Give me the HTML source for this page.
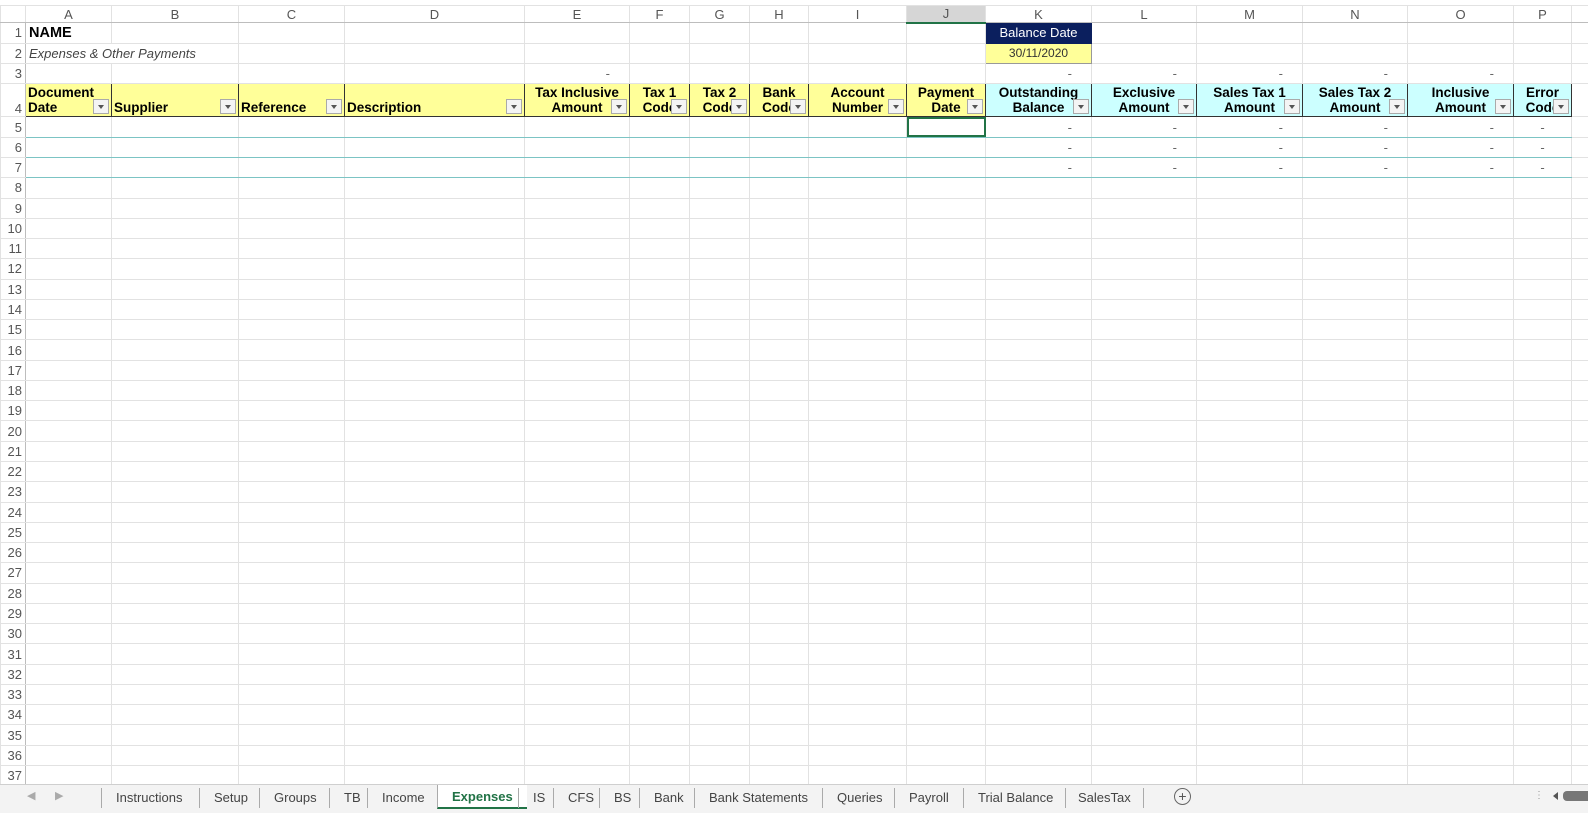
<!DOCTYPE html>
<html><head><meta charset="utf-8"><style>
*{box-sizing:border-box;margin:0;padding:0}
body{width:1588px;height:813px;overflow:hidden;background:#fff;font-family:"Liberation Sans",sans-serif;font-size:13px;color:#000;position:relative}
table{position:absolute;left:0;top:5px;border-collapse:collapse;table-layout:fixed;width:1588px}
td,th{border:1px solid #e2e2e2;height:20.27px;padding:0 3px;white-space:nowrap;overflow:hidden;font-weight:normal;position:relative}
th{color:#555;font-size:13px;text-align:center;background:#fff}
thead th{height:17.3px;border-bottom:1px solid #bdbdbd}
tbody th{text-align:right;padding-right:3px;border-right:1px solid #bdbdbd}
tr.h4 td{height:33.4px;font-weight:bold;font-size:13.5px;line-height:15px;vertical-align:bottom;border:1px solid #333;padding:0 17px 1px 2px}
tr.h4 td.y{background:#ffff99}
tr.h4 td.c{background:#ccffff;text-align:center;padding:0 2px 1px 2px}
tr.h4 td.yc{background:#ffff99;text-align:center;padding:0 2px 1px 2px}
.dd{position:absolute;right:2px;bottom:2px;width:16px;height:15px;border:1px solid #aaa;background:#f4f4f4}
.dd:after{content:"";position:absolute;left:4px;top:5px;border-left:3.5px solid transparent;border-right:3.5px solid transparent;border-top:4px solid #555}
tr.t td{border-bottom:1px solid #7cc4c4}
.dash{text-align:right;color:#666;padding-right:19px}
.tabs{position:absolute;left:0;top:784px;width:1588px;height:29px;background:#f3f3f3;border-top:1px solid #cfcfcf}
.tab{position:absolute;top:3px;height:20px;line-height:20px;font-size:13px;color:#444;padding:0 14px;border-left:1px solid #aaa}
</style></head><body>
<table>
<colgroup><col style="width:25px"><col style="width:86px"><col style="width:127px"><col style="width:106px"><col style="width:180px"><col style="width:105px"><col style="width:60px"><col style="width:60px"><col style="width:59px"><col style="width:98px"><col style="width:79px"><col style="width:106px"><col style="width:105px"><col style="width:106px"><col style="width:105px"><col style="width:106px"><col style="width:58px"><col style="width:17px"></colgroup>
<thead><tr><th></th><th>A</th><th>B</th><th>C</th><th>D</th><th>E</th><th>F</th><th>G</th><th>H</th><th>I</th><th style="background:#d6d6d6;border-bottom:2px solid #217346">J</th><th>K</th><th>L</th><th>M</th><th>N</th><th>O</th><th>P</th><th></th></tr></thead>
<tbody>
<tr><th>1</th><td style="font-weight:bold;font-size:14.5px">NAME</td><td></td><td></td><td></td><td></td><td></td><td></td><td></td><td></td><td></td><td style="background:#0b1f5e;color:#fff;text-align:center;border:1px solid #0b1f5e">Balance Date</td><td></td><td></td><td></td><td></td><td></td><td></td></tr>
<tr><th>2</th><td colspan="2" style="font-style:italic;color:#444">Expenses &amp; Other Payments</td><td></td><td></td><td></td><td></td><td></td><td></td><td></td><td></td><td style="background:#ffff99;text-align:center;color:#333;font-size:12px;border:1px solid #999">30/11/2020</td><td></td><td></td><td></td><td></td><td></td><td></td></tr>
<tr><th>3</th><td></td><td></td><td></td><td></td><td class="dash">-</td><td></td><td></td><td></td><td></td><td></td><td class="dash">-</td><td class="dash">-</td><td class="dash">-</td><td class="dash">-</td><td class="dash">-</td><td></td><td></td></tr>
<tr class="h4"><th style="vertical-align:bottom">4</th>
<td class="y">Document<br>Date<span class="dd"></span></td>
<td class="y">Supplier<span class="dd"></span></td>
<td class="y">Reference<span class="dd"></span></td>
<td class="y">Description<span class="dd"></span></td>
<td class="yc">Tax Inclusive<br>Amount<span class="dd"></span></td>
<td class="yc">Tax 1<br>Code<span class="dd"></span></td>
<td class="yc">Tax 2<br>Code<span class="dd"></span></td>
<td class="yc">Bank<br>Code<span class="dd"></span></td>
<td class="yc">Account<br>Number<span class="dd"></span></td>
<td class="yc">Payment<br>Date<span class="dd"></span></td>
<td class="c">Outstanding<br>Balance<span class="dd"></span></td>
<td class="c">Exclusive<br>Amount<span class="dd"></span></td>
<td class="c">Sales Tax 1<br>Amount<span class="dd"></span></td>
<td class="c">Sales Tax 2<br>Amount<span class="dd"></span></td>
<td class="c">Inclusive<br>Amount<span class="dd"></span></td>
<td class="c">Error<br>Code<span class="dd"></span></td>
<td style="border:none;border-left:1px solid #333;background:#fff"></td></tr>
<tr class="t"><th>5</th><td></td><td></td><td></td><td></td><td></td><td></td><td></td><td></td><td></td><td style="outline:2px solid #217346;outline-offset:-2px"></td><td class="dash">-</td><td class="dash">-</td><td class="dash">-</td><td class="dash">-</td><td class="dash">-</td><td class="dash" style="text-align:center;padding:0">-</td><td style="border-left:1px solid #7cc4c4;border-bottom-color:#e2e2e2"></td></tr>
<tr class="t"><th>6</th><td></td><td></td><td></td><td></td><td></td><td></td><td></td><td></td><td></td><td></td><td class="dash">-</td><td class="dash">-</td><td class="dash">-</td><td class="dash">-</td><td class="dash">-</td><td class="dash" style="text-align:center;padding:0">-</td><td style="border-left:1px solid #7cc4c4;border-bottom-color:#e2e2e2"></td></tr>
<tr class="t"><th>7</th><td></td><td></td><td></td><td></td><td></td><td></td><td></td><td></td><td></td><td></td><td class="dash">-</td><td class="dash">-</td><td class="dash">-</td><td class="dash">-</td><td class="dash">-</td><td class="dash" style="text-align:center;padding:0">-</td><td style="border-left:1px solid #7cc4c4;border-bottom-color:#e2e2e2"></td></tr>
<tr><th>8</th><td></td><td></td><td></td><td></td><td></td><td></td><td></td><td></td><td></td><td></td><td></td><td></td><td></td><td></td><td></td><td></td><td></td></tr>
<tr><th>9</th><td></td><td></td><td></td><td></td><td></td><td></td><td></td><td></td><td></td><td></td><td></td><td></td><td></td><td></td><td></td><td></td><td></td></tr>
<tr><th>10</th><td></td><td></td><td></td><td></td><td></td><td></td><td></td><td></td><td></td><td></td><td></td><td></td><td></td><td></td><td></td><td></td><td></td></tr>
<tr><th>11</th><td></td><td></td><td></td><td></td><td></td><td></td><td></td><td></td><td></td><td></td><td></td><td></td><td></td><td></td><td></td><td></td><td></td></tr>
<tr><th>12</th><td></td><td></td><td></td><td></td><td></td><td></td><td></td><td></td><td></td><td></td><td></td><td></td><td></td><td></td><td></td><td></td><td></td></tr>
<tr><th>13</th><td></td><td></td><td></td><td></td><td></td><td></td><td></td><td></td><td></td><td></td><td></td><td></td><td></td><td></td><td></td><td></td><td></td></tr>
<tr><th>14</th><td></td><td></td><td></td><td></td><td></td><td></td><td></td><td></td><td></td><td></td><td></td><td></td><td></td><td></td><td></td><td></td><td></td></tr>
<tr><th>15</th><td></td><td></td><td></td><td></td><td></td><td></td><td></td><td></td><td></td><td></td><td></td><td></td><td></td><td></td><td></td><td></td><td></td></tr>
<tr><th>16</th><td></td><td></td><td></td><td></td><td></td><td></td><td></td><td></td><td></td><td></td><td></td><td></td><td></td><td></td><td></td><td></td><td></td></tr>
<tr><th>17</th><td></td><td></td><td></td><td></td><td></td><td></td><td></td><td></td><td></td><td></td><td></td><td></td><td></td><td></td><td></td><td></td><td></td></tr>
<tr><th>18</th><td></td><td></td><td></td><td></td><td></td><td></td><td></td><td></td><td></td><td></td><td></td><td></td><td></td><td></td><td></td><td></td><td></td></tr>
<tr><th>19</th><td></td><td></td><td></td><td></td><td></td><td></td><td></td><td></td><td></td><td></td><td></td><td></td><td></td><td></td><td></td><td></td><td></td></tr>
<tr><th>20</th><td></td><td></td><td></td><td></td><td></td><td></td><td></td><td></td><td></td><td></td><td></td><td></td><td></td><td></td><td></td><td></td><td></td></tr>
<tr><th>21</th><td></td><td></td><td></td><td></td><td></td><td></td><td></td><td></td><td></td><td></td><td></td><td></td><td></td><td></td><td></td><td></td><td></td></tr>
<tr><th>22</th><td></td><td></td><td></td><td></td><td></td><td></td><td></td><td></td><td></td><td></td><td></td><td></td><td></td><td></td><td></td><td></td><td></td></tr>
<tr><th>23</th><td></td><td></td><td></td><td></td><td></td><td></td><td></td><td></td><td></td><td></td><td></td><td></td><td></td><td></td><td></td><td></td><td></td></tr>
<tr><th>24</th><td></td><td></td><td></td><td></td><td></td><td></td><td></td><td></td><td></td><td></td><td></td><td></td><td></td><td></td><td></td><td></td><td></td></tr>
<tr><th>25</th><td></td><td></td><td></td><td></td><td></td><td></td><td></td><td></td><td></td><td></td><td></td><td></td><td></td><td></td><td></td><td></td><td></td></tr>
<tr><th>26</th><td></td><td></td><td></td><td></td><td></td><td></td><td></td><td></td><td></td><td></td><td></td><td></td><td></td><td></td><td></td><td></td><td></td></tr>
<tr><th>27</th><td></td><td></td><td></td><td></td><td></td><td></td><td></td><td></td><td></td><td></td><td></td><td></td><td></td><td></td><td></td><td></td><td></td></tr>
<tr><th>28</th><td></td><td></td><td></td><td></td><td></td><td></td><td></td><td></td><td></td><td></td><td></td><td></td><td></td><td></td><td></td><td></td><td></td></tr>
<tr><th>29</th><td></td><td></td><td></td><td></td><td></td><td></td><td></td><td></td><td></td><td></td><td></td><td></td><td></td><td></td><td></td><td></td><td></td></tr>
<tr><th>30</th><td></td><td></td><td></td><td></td><td></td><td></td><td></td><td></td><td></td><td></td><td></td><td></td><td></td><td></td><td></td><td></td><td></td></tr>
<tr><th>31</th><td></td><td></td><td></td><td></td><td></td><td></td><td></td><td></td><td></td><td></td><td></td><td></td><td></td><td></td><td></td><td></td><td></td></tr>
<tr><th>32</th><td></td><td></td><td></td><td></td><td></td><td></td><td></td><td></td><td></td><td></td><td></td><td></td><td></td><td></td><td></td><td></td><td></td></tr>
<tr><th>33</th><td></td><td></td><td></td><td></td><td></td><td></td><td></td><td></td><td></td><td></td><td></td><td></td><td></td><td></td><td></td><td></td><td></td></tr>
<tr><th>34</th><td></td><td></td><td></td><td></td><td></td><td></td><td></td><td></td><td></td><td></td><td></td><td></td><td></td><td></td><td></td><td></td><td></td></tr>
<tr><th>35</th><td></td><td></td><td></td><td></td><td></td><td></td><td></td><td></td><td></td><td></td><td></td><td></td><td></td><td></td><td></td><td></td><td></td></tr>
<tr><th>36</th><td></td><td></td><td></td><td></td><td></td><td></td><td></td><td></td><td></td><td></td><td></td><td></td><td></td><td></td><td></td><td></td><td></td></tr>
<tr><th>37</th><td></td><td></td><td></td><td></td><td></td><td></td><td></td><td></td><td></td><td></td><td></td><td></td><td></td><td></td><td></td><td></td><td></td></tr>
<tr><th>38</th><td></td><td></td><td></td><td></td><td></td><td></td><td></td><td></td><td></td><td></td><td></td><td></td><td></td><td></td><td></td><td></td><td></td></tr>
</tbody></table>
<div class="tabs">
<span style="position:absolute;left:27px;top:4px;color:#aaa;font-size:11px">&#9664;</span>
<span style="position:absolute;left:55px;top:4px;color:#aaa;font-size:11px">&#9654;</span>
<div class="tab" style="left:101px">Instructions</div>
<div class="tab" style="left:199px">Setup</div>
<div class="tab" style="left:259px">Groups</div>
<div class="tab" style="left:329px">TB</div>
<div class="tab" style="left:367px">Income</div>
<div class="tab" style="left:437px;top:0;height:24px;line-height:24px;background:#fff;color:#217346;font-weight:bold;border-bottom:2px solid #217346">Expenses</div>
<div class="tab" style="left:518px">IS</div>
<div class="tab" style="left:553px">CFS</div>
<div class="tab" style="left:599px">BS</div>
<div class="tab" style="left:639px">Bank</div>
<div class="tab" style="left:694px">Bank Statements</div>
<div class="tab" style="left:822px">Queries</div>
<div class="tab" style="left:894px">Payroll</div>
<div class="tab" style="left:963px">Trial Balance</div>
<div class="tab" style="left:1065px;border-right:1px solid #aaa;padding:0 12px">SalesTax</div>
<div style="position:absolute;left:1174px;top:3px;width:17px;height:17px;border:1px solid #666;border-radius:50%;text-align:center;line-height:15px;color:#555;font-size:14px">+</div>
<div style="position:absolute;left:1534px;top:5px;color:#999;font-size:10px">&#8942;</div>
<div style="position:absolute;left:1553px;top:7px;border-top:4px solid transparent;border-bottom:4px solid transparent;border-right:5px solid #555"></div>
<div style="position:absolute;left:1563px;top:6px;width:25px;height:10px;background:#777;border-radius:4px 0 0 4px"></div>
</div>
</body></html>
